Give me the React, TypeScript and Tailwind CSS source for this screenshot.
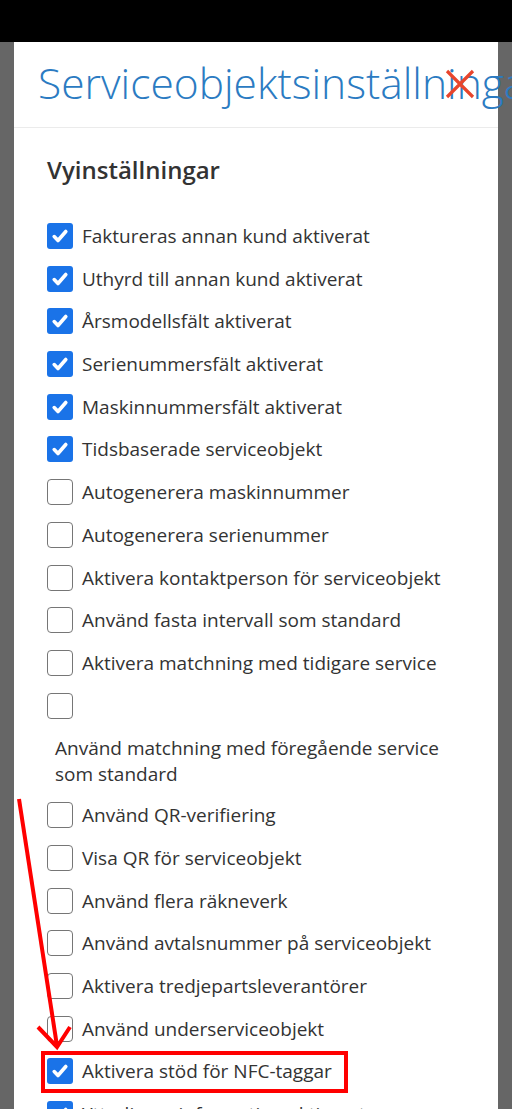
import React from 'react';

type Item = { label: string; checked: boolean; wrap?: boolean };

const items: Item[] = [
  { label: 'Faktureras annan kund aktiverat', checked: true },
  { label: 'Uthyrd till annan kund aktiverat', checked: true },
  { label: 'Årsmodellsfält aktiverat', checked: true },
  { label: 'Serienummersfält aktiverat', checked: true },
  { label: 'Maskinnummersfält aktiverat', checked: true },
  { label: 'Tidsbaserade serviceobjekt', checked: true },
  { label: 'Autogenerera maskinnummer', checked: false },
  { label: 'Autogenerera serienummer', checked: false },
  { label: 'Aktivera kontaktperson för serviceobjekt', checked: false },
  { label: 'Använd fasta intervall som standard', checked: false },
  { label: 'Aktivera matchning med tidigare service', checked: false },
  { label: 'Använd matchning med föregående service som standard', checked: false, wrap: true },
  { label: 'Använd QR-verifiering', checked: false },
  { label: 'Visa QR för serviceobjekt', checked: false },
  { label: 'Använd flera räkneverk', checked: false },
  { label: 'Använd avtalsnummer på serviceobjekt', checked: false },
  { label: 'Aktivera tredjepartsleverantörer', checked: false },
  { label: 'Använd underserviceobjekt', checked: false },
  { label: 'Aktivera stöd för NFC-taggar', checked: true },
  { label: 'Ytterligare information aktiverat', checked: true },
];

function Box({ checked }: { checked: boolean }) {
  if (checked) {
    return (
      <span className="flex h-[26px] w-[26px] shrink-0 items-center justify-center rounded-[3px] bg-[#1a73e8]">
        <svg width="18" height="18" viewBox="0 0 18 18" fill="none">
          <path d="M3.2 9.6l3.8 3.9 7.8-9" stroke="white" strokeWidth="3.6" strokeLinecap="round" strokeLinejoin="round" />
        </svg>
      </span>
    );
  }
  return <span className="h-[26px] w-[26px] shrink-0 rounded-[4px] border-[1.5px] border-[#767676] bg-white" />;
}

export default function App() {
  return (
    <div className="relative min-h-screen overflow-x-hidden bg-[#666666] font-['Open_Sans',sans-serif]">
      <div className="h-[42px] bg-black" />

      <div className="mx-[14px] bg-white">
        {/* header */}
        <div className="relative h-[86px] border-b border-[#ebebeb]">
          <h1 className="relative z-10 w-max whitespace-nowrap pl-[24px] pt-[11px] text-[42.5px] font-light leading-[60px] text-[#2b7bc2]">
            Serviceobjektsinställningar
          </h1>
          <svg className="absolute left-[431px] top-[27px] z-20" width="30" height="30" viewBox="0 0 30 30">
            <path d="M2 2L28 28M28 2L2 28" stroke="#e8452c" strokeWidth="3.2" />
          </svg>
        </div>

        {/* body */}
        <div className="px-[33px] pt-[26px] pb-10">
          <h2 className="text-[24px] font-semibold leading-[32px] text-[#333]">Vyinställningar</h2>

          <div className="mt-[37px] flex flex-col gap-[16.7px]">
            {items.map((it) =>
              it.wrap ? (
                <div key={it.label} className="mb-[-1px] flex flex-col">
                  <Box checked={it.checked} />
                  <span className="mt-[16px] pl-[8px] pr-[20px] text-[19px] leading-[26px] text-[#333]">{it.label}</span>
                </div>
              ) : (
                <label key={it.label} className="flex h-[26px] items-center gap-[9px]">
                  <Box checked={it.checked} />
                  <span className="whitespace-nowrap text-[19px] leading-[26px] text-[#333]">{it.label}</span>
                </label>
              )
            )}
          </div>
        </div>
      </div>

      {/* annotation */}
      <div className="absolute left-[41px] top-[1051px] h-[42px] w-[307px] border-[4px] border-[#ff0000]" />
      <svg className="absolute left-0 top-0" width="100" height="1109" viewBox="0 0 100 1109">
        <path d="M19 799L57 1046" stroke="#ff0000" strokeWidth="4" fill="none" />
        <path d="M38 1027L57 1047L70 1027" stroke="#ff0000" strokeWidth="4" fill="none" strokeLinejoin="miter" />
      </svg>
    </div>
  );
}
